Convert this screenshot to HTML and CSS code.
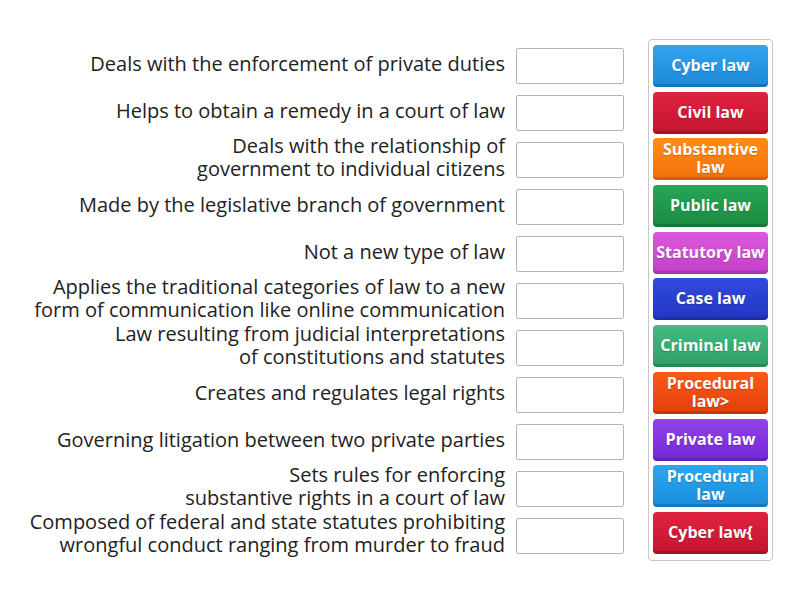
FILE: index.html
```html
<!DOCTYPE html>
<html lang="en">
<head>
  <meta charset="UTF-8" />
  <meta name="viewport" content="width=device-width, initial-scale=1.0" />
  <title>Match up: Types of law</title>

  <!-- Styles -->
  <link rel="stylesheet" href="styles.css">
</head>

<body>
  <main class="board">
    <!-- Prompts with empty drop boxes -->
    <section class="prompts">
      <div class="row"><p class="prompt">Deals with the enforcement of private duties</p><div class="slot"></div></div>
      <div class="row"><p class="prompt">Helps to obtain a remedy in a court of law</p><div class="slot"></div></div>
      <div class="row"><p class="prompt">Deals with the relationship of<br>government to individual citizens</p><div class="slot"></div></div>
      <div class="row"><p class="prompt">Made by the legislative branch of government</p><div class="slot"></div></div>
      <div class="row"><p class="prompt">Not a new type of law</p><div class="slot"></div></div>
      <div class="row"><p class="prompt">Applies the traditional categories of law to a new<br>form of communication like online communication</p><div class="slot"></div></div>
      <div class="row"><p class="prompt">Law resulting from judicial interpretations<br>of constitutions and statutes</p><div class="slot"></div></div>
      <div class="row"><p class="prompt">Creates and regulates legal rights</p><div class="slot"></div></div>
      <div class="row"><p class="prompt">Governing litigation between two private parties</p><div class="slot"></div></div>
      <div class="row"><p class="prompt">Sets rules for enforcing<br>substantive rights in a court of law</p><div class="slot"></div></div>
      <div class="row"><p class="prompt">Composed of federal and state statutes prohibiting<br>wrongful conduct ranging from murder to fraud</p><div class="slot"></div></div>
    </section>

    <!-- Answer tiles -->
    <section class="tiles">
      <div class="tile blue">Cyber law</div>
      <div class="tile red">Civil law</div>
      <div class="tile orange">Substantive<br>law</div>
      <div class="tile green">Public law</div>
      <div class="tile pink">Statutory law</div>
      <div class="tile navy">Case law</div>
      <div class="tile mint">Criminal law</div>
      <div class="tile flame">Procedural<br>law&gt;</div>
      <div class="tile purple">Private law</div>
      <div class="tile sky">Procedural<br>law</div>
      <div class="tile red">Cyber law{</div>
    </section>
  </main>
</body>
</html>
```

FILE: styles.css
```css
* {
  box-sizing: border-box;
  margin: 0;
  padding: 0;
}

body {
  font-family: 'Open Sans', sans-serif;
  background: #fff;
  color: #222;
}

.board {
  display: flex;
  align-items: flex-start;
  gap: 24px;
  padding: 39px 0 0 15px;
}

/* Prompts */
.prompts {
  display: flex;
  flex-direction: column;
  padding-top: 3.5px;
}

.row {
  display: flex;
  align-items: center;
  gap: 11px;
  height: 47px;
}

.prompt {
  width: 490px;
  padding-bottom: 6px;
  text-align: right;
  font-size: 20px;
  line-height: 23px;
}

.slot {
  width: 108px;
  height: 36px;
  border: 1px solid #b4b4b4;
  border-radius: 2px;
  background: #fff;
}

/* Tiles */
.tiles {
  display: flex;
  flex-direction: column;
  gap: 4.7px;
  width: 125px;
  padding: 5px 4px 6px;
  border: 1px solid #c8c8c8;
  border-radius: 4px;
}

.tile {
  height: 42px;
  padding-bottom: 2px;
  display: flex;
  align-items: center;
  justify-content: center;
  text-align: center;
  border-radius: 4px;
  color: #fff;
  font-weight: 700;
  font-size: 16px;
  line-height: 18px;
  text-shadow: 0 1px 1px rgba(0, 0, 0, 0.2);
  box-shadow: inset 0 -3px 0 rgba(0, 0, 0, 0.15);
  white-space: nowrap;
}

.blue   { background: linear-gradient(#33a3ee, #1c88d9); }
.red    { background: linear-gradient(#e0223f, #c3152f); }
.orange { background: linear-gradient(#ff8c18, #f2700a); }
.green  { background: linear-gradient(#27a656, #1b8b42); }
.pink   { background: linear-gradient(#dc58dc, #c23ec6); }
.navy   { background: linear-gradient(#3149de, #2236c1); }
.mint   { background: linear-gradient(#42bc80, #2f9f67); }
.flame  { background: linear-gradient(#fc5a18, #e23f0b); }
.purple { background: linear-gradient(#9143ea, #7326d6); }
.sky    { background: linear-gradient(#2aa6ee, #1c8ddc); }
```
